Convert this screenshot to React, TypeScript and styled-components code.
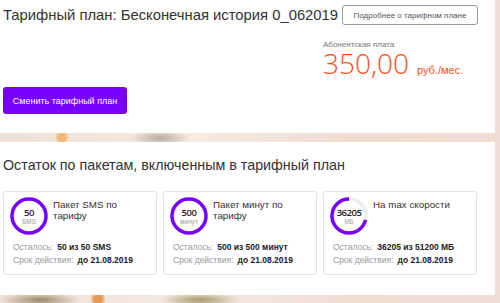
import React from "react";
import styled, { createGlobalStyle } from "styled-components";

const Global = createGlobalStyle`
  html, body { margin: 0; padding: 0; }
  body {
    width: 500px;
    height: 303px;
    overflow: hidden;
    font-family: "Liberation Sans", Arial, sans-serif;
    color: #333;
    background:
      radial-gradient(circle at 62px 137px, #f2b878 0 4px, transparent 7px),
      radial-gradient(circle at 98px 299px, #e49a55 0 4px, transparent 8px),
      radial-gradient(ellipse 30px 8px at 160px 138px, #b6aaa0, transparent),
      radial-gradient(ellipse 40px 8px at 40px 300px, #9c8a6a, transparent),
      radial-gradient(ellipse 40px 8px at 200px 300px, #a79a6c, transparent),
      linear-gradient(90deg, #efe1d6 0%, #f5ebe2 40%, #efdcd1 70%, #f1ddd3 100%);
  }
`;

const Page = styled.div`
  width: 495px;
  display: flex;
  flex-direction: column;
  gap: 9px;
`;

const Panel = styled.section`
  background: #fff;
  box-sizing: border-box;
`;

const TopPanel = styled(Panel)`
  height: 133px;
  padding: 5px 17px 0 3px;
`;

const BottomPanel = styled(Panel)`
  height: 153px;
  padding: 14px 18px 0 3px;
`;

const HeaderRow = styled.div`
  display: flex;
  justify-content: space-between;
  align-items: center;
  height: 20px;
`;

const Title = styled.h1`
  margin: 0;
  font-size: 14.8px;
  font-weight: 400;
  color: #333;
  white-space: nowrap;
`;

const OutlineButton = styled.button`
  height: 20px;
  width: 136px;
  border: 1px solid #9a9a9a;
  border-radius: 3px;
  background: #fff;
  color: #555;
  font-family: inherit;
  font-size: 8px;
  padding: 0;
  white-space: nowrap;
`;

const Grid = styled.div`
  display: grid;
  grid-template-columns: repeat(3, 154px);
  column-gap: 6px;
`;

const PriceBlock = styled.div`
  grid-column: 3;
  margin-top: 15px;
`;

const PriceLabel = styled.div`
  font-size: 8px;
  color: #777;
  line-height: 9px;
`;

const PriceRow = styled.div`
  display: flex;
  align-items: baseline;
  gap: 8px;
  color: #ff4f1a;
  white-space: nowrap;
`;

const PriceValue = styled.span`
  font-family: "Open Sans", "Liberation Sans", sans-serif;
  font-size: 28px;
  font-weight: 300;
  line-height: 28px;
`;

const PriceUnit = styled.span`
  font-size: 11px;
`;

const PrimaryButton = styled.button`
  margin-top: 10px;
  width: 124px;
  height: 27px;
  border: none;
  border-radius: 3px;
  background: #7700ff;
  color: #fff;
  font-family: inherit;
  font-size: 9px;
  padding: 0;
`;

const SectionTitle = styled.h2`
  margin: 0 0 17px;
  font-size: 14.3px;
  font-weight: 400;
  color: #333;
  line-height: 18px;
  white-space: nowrap;
`;

const Card = styled.div`
  height: 84px;
  box-sizing: border-box;
  border: 1px solid #e3e3e3;
  border-radius: 3px;
  padding: 5px 6px 0 6px;
`;

const CardTop = styled.div`
  display: flex;
  gap: 5px;
  align-items: flex-start;
  height: 40px;
`;

const Ring = styled.div`
  position: relative;
  width: 38px;
  height: 38px;
  flex: none;
`;

const RingLabel = styled.div`
  position: absolute;
  inset: 0;
  display: flex;
  flex-direction: column;
  align-items: center;
  justify-content: center;
`;

const RingValue = styled.span`
  font-family: "Open Sans", sans-serif;
  font-size: 9.5px;
  font-weight: 600;
  color: #222;
  line-height: 11px;
  letter-spacing: -0.5px;
`;

const RingUnit = styled.span`
  font-size: 6.5px;
  color: #999;
  line-height: 7px;
`;

const CardTitle = styled.div`
  font-size: 9.8px;
  line-height: 11px;
  color: #333;
  margin-top: 2px;
  max-width: 80px;
`;

const InfoRows = styled.div`
  display: flex;
  flex-direction: column;
  gap: 4px;
  margin-top: 6px;
  padding-left: 3px;
`;

const InfoRow = styled.div`
  display: flex;
  gap: 4px;
  font-size: 8.5px;
  line-height: 9px;
  white-space: nowrap;
`;

const InfoKey = styled.span`
  color: #999;
`;

const InfoVal = styled.span`
  color: #222;
  font-weight: 700;
`;

type Pack = {
  value: string;
  unit: string;
  title: string;
  left: string;
  ratio: number;
};

const packs: Pack[] = [
  { value: "50", unit: "SMS", title: "Пакет SMS по тарифу", left: "50 из 50 SMS", ratio: 1 },
  { value: "500", unit: "минут", title: "Пакет минут по тарифу", left: "500 из 500 минут", ratio: 1 },
  { value: "36205", unit: "МБ", title: "На max скорости", left: "36205 из 51200 МБ", ratio: 36205 / 51200 },
];

function ProgressRing({ ratio }: { ratio: number }) {
  const r = 17;
  const c = 2 * Math.PI * r;
  return (
    <svg width="38" height="38" viewBox="0 0 38 38">
      <circle cx="19" cy="19" r={r} fill="none" stroke="#eeeeee" strokeWidth="3.5" />
      <circle
        cx="19"
        cy="19"
        r={r}
        fill="none"
        stroke="#7700ff"
        strokeWidth="3.5"
        strokeDasharray={`${c * ratio} ${c}`}
        transform="translate(38 0) scale(-1 1) rotate(-90 19 19)"
      />
    </svg>
  );
}

export default function App() {
  return (
    <>
      <Global />
      <Page>
        <TopPanel>
          <HeaderRow>
            <Title>Тарифный план: Бесконечная история 0_062019</Title>
            <OutlineButton>Подробнее о тарифном плане</OutlineButton>
          </HeaderRow>
          <Grid>
            <PriceBlock>
              <PriceLabel>Абонентская плата</PriceLabel>
              <PriceRow>
                <PriceValue>350,00</PriceValue>
                <PriceUnit>руб./мес.</PriceUnit>
              </PriceRow>
            </PriceBlock>
          </Grid>
          <PrimaryButton>Сменить тарифный план</PrimaryButton>
        </TopPanel>
        <BottomPanel>
          <SectionTitle>Остаток по пакетам, включенным в тарифный план</SectionTitle>
          <Grid>
            {packs.map((p) => (
              <Card key={p.title}>
                <CardTop>
                  <Ring>
                    <ProgressRing ratio={p.ratio} />
                    <RingLabel>
                      <RingValue>{p.value}</RingValue>
                      <RingUnit>{p.unit}</RingUnit>
                    </RingLabel>
                  </Ring>
                  <CardTitle>{p.title}</CardTitle>
                </CardTop>
                <InfoRows>
                  <InfoRow>
                    <InfoKey>Осталось:</InfoKey>
                    <InfoVal>{p.left}</InfoVal>
                  </InfoRow>
                  <InfoRow>
                    <InfoKey>Срок действия:</InfoKey>
                    <InfoVal>до 21.08.2019</InfoVal>
                  </InfoRow>
                </InfoRows>
              </Card>
            ))}
          </Grid>
        </BottomPanel>
      </Page>
    </>
  );
}
